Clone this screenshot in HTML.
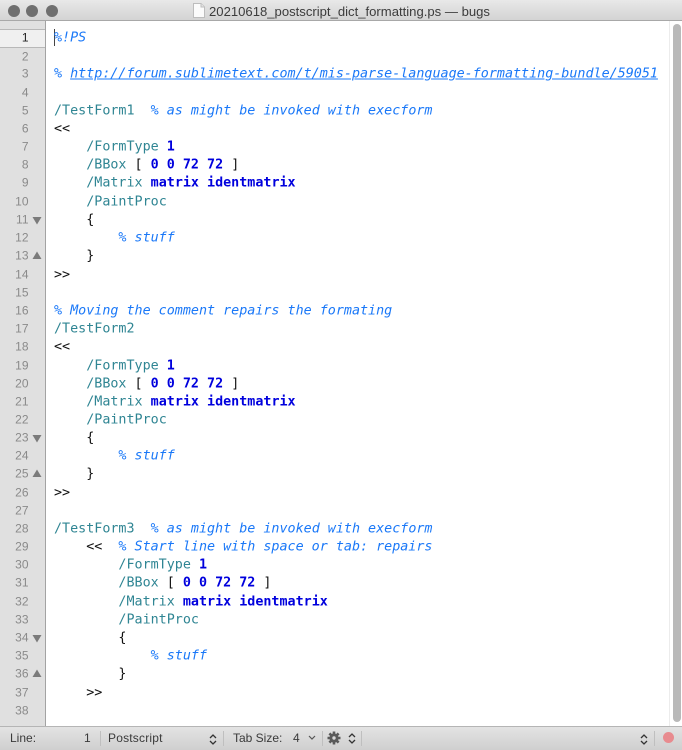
<!DOCTYPE html>
<html><head><meta charset="utf-8">
<style>
html,body{margin:0;padding:0;width:682px;height:750px;overflow:hidden;background:#fff}
#w{position:absolute;left:0;top:0;width:682px;height:750px;overflow:hidden;filter:blur(.35px)}
#tb{position:absolute;left:0;top:0;width:682px;height:20px;background:linear-gradient(#e8e8e8,#d3d3d3);border-bottom:1px solid #a8a8a8;box-sizing:content-box}
.dot{position:absolute;top:5px;width:12px;height:12px;border-radius:50%;background:#6f6f6f}
#title{position:absolute;left:209px;top:3px;font:13.1px/17px "Liberation Sans",sans-serif;color:#3c3c3c;white-space:pre}
#gut{position:absolute;left:0;top:21px;width:45px;height:705px;background:#e0e0e0;border-right:1px solid #a3a3a3}
#cur{position:absolute;left:0;top:29px;width:45px;height:17px;background:#f0f0f0;border-top:1px solid #b8b8b8;border-bottom:1px solid #b8b8b8}
.n{position:absolute;left:0;width:28.500px;text-align:right;font:12px/18px "Liberation Sans",sans-serif;color:#8a8a8a;transform:translateY(.5px)}
.c{position:absolute;left:54px;font:13.39px/18px "DejaVu Sans Mono",monospace;color:#111;white-space:pre;transform:translateY(1.5px)}
.k{color:#2f8593}.o{color:#1a78f8;font-style:italic}.b{color:#0000dd;font-weight:bold}.u{text-decoration:underline}
#caret{position:absolute;left:54px;top:29px;width:1px;height:17px;background:#444}
#sbt{position:absolute;left:672.500px;top:24px;width:8px;height:698px;background:#b9b9b9;border-radius:4px}
#sbl{position:absolute;left:669px;top:21px;width:1px;height:705px;background:#ececec}
#st{position:absolute;left:0;top:726px;width:682px;height:24px;background:linear-gradient(#e3e3e3,#cfcfcf);border-top:1px solid #b5b5b5;box-sizing:border-box;font:12px/23px "Liberation Sans",sans-serif;color:#3a3a3a}
#st span{position:absolute;top:0;white-space:pre}
#st i{position:absolute;top:4px;width:1px;height:15px;background:#bfbfbf}
#st svg{position:absolute}
</style></head><body><div id="w">
<div id="tb">
<div class="dot" style="left:7.500px"></div><div class="dot" style="left:26px"></div><div class="dot" style="left:45.500px"></div>
<svg style="position:absolute;left:193px;top:3px" width="12" height="15" viewBox="0 0 12 15"><path d="M.5.5H8L11.500 4V14.500H.5Z" fill="#fbfbfb" stroke="#bdbdbd"/><path d="M8 .5V4H11.500" fill="#e5e5e5" stroke="#bdbdbd"/></svg>
<div id="title">20210618_postscript_dict_formatting.ps — bugs</div>
</div>
<div id="gut"></div>
<div id="cur"></div>
<div id="sbl"></div>
<div id="sbt"></div>
<div class="n" style="top:28px;color:#222">1</div><div class="n" style="top:47px">2</div><div class="n" style="top:64px">3</div><div class="n" style="top:83px">4</div><div class="n" style="top:101px">5</div><div class="n" style="top:119px">6</div><div class="n" style="top:137px">7</div><div class="n" style="top:155px">8</div><div class="n" style="top:173px">9</div><div class="n" style="top:192px">10</div><div class="n" style="top:210px">11</div><div class="n" style="top:228px">12</div><div class="n" style="top:246px">13</div><div class="n" style="top:265px">14</div><div class="n" style="top:283px">15</div><div class="n" style="top:301px">16</div><div class="n" style="top:319px">17</div><div class="n" style="top:337px">18</div><div class="n" style="top:356px">19</div><div class="n" style="top:374px">20</div><div class="n" style="top:392px">21</div><div class="n" style="top:410px">22</div><div class="n" style="top:428px">23</div><div class="n" style="top:446px">24</div><div class="n" style="top:464px">25</div><div class="n" style="top:483px">26</div><div class="n" style="top:501px">27</div><div class="n" style="top:519px">28</div><div class="n" style="top:537px">29</div><div class="n" style="top:555px">30</div><div class="n" style="top:573px">31</div><div class="n" style="top:592px">32</div><div class="n" style="top:610px">33</div><div class="n" style="top:628px">34</div><div class="n" style="top:646px">35</div><div class="n" style="top:664px">36</div><div class="n" style="top:683px">37</div><div class="n" style="top:701px">38</div>
<svg style="position:absolute;left:0;top:0" width="46" height="726">
<g fill="#7b7b7b"><path d="M32.500 217h9l-4.500 7.500zM32.500 435h9l-4.500 7.500zM32.500 635h9l-4.500 7.500zM37 251.500l4.500 7.500h-9zM37 469.500l4.500 7.500h-9zM37 669.500l4.500 7.500h-9z"/></g></svg>
<div id="caret"></div>
<div class="c" style="top:28px"><span class="o">%!PS</span></div>
<div class="c" style="top:64px"><span class="o">% <span class="u">http://forum.sublimetext.com/t/mis-parse-language-formatting-bundle/59051</span></span></div>
<div class="c" style="top:101px"><span class="k">/TestForm1</span>  <span class="o">% as might be invoked with execform</span></div>
<div class="c" style="top:119px">&lt;&lt;</div>
<div class="c" style="top:137px">    <span class="k">/FormType</span> <span class="b">1</span></div>
<div class="c" style="top:155px">    <span class="k">/BBox</span> [ <span class="b">0 0 72 72</span> ]</div>
<div class="c" style="top:173px">    <span class="k">/Matrix</span> <span class="b">matrix identmatrix</span></div>
<div class="c" style="top:192px">    <span class="k">/PaintProc</span></div>
<div class="c" style="top:210px">    {</div>
<div class="c" style="top:228px">        <span class="o">% stuff</span></div>
<div class="c" style="top:246px">    }</div>
<div class="c" style="top:265px">&gt;&gt;</div>
<div class="c" style="top:301px"><span class="o">% Moving the comment repairs the formating</span></div>
<div class="c" style="top:319px"><span class="k">/TestForm2</span></div>
<div class="c" style="top:337px">&lt;&lt;</div>
<div class="c" style="top:356px">    <span class="k">/FormType</span> <span class="b">1</span></div>
<div class="c" style="top:374px">    <span class="k">/BBox</span> [ <span class="b">0 0 72 72</span> ]</div>
<div class="c" style="top:392px">    <span class="k">/Matrix</span> <span class="b">matrix identmatrix</span></div>
<div class="c" style="top:410px">    <span class="k">/PaintProc</span></div>
<div class="c" style="top:428px">    {</div>
<div class="c" style="top:446px">        <span class="o">% stuff</span></div>
<div class="c" style="top:464px">    }</div>
<div class="c" style="top:483px">&gt;&gt;</div>
<div class="c" style="top:519px"><span class="k">/TestForm3</span>  <span class="o">% as might be invoked with execform</span></div>
<div class="c" style="top:537px">    &lt;&lt;  <span class="o">% Start line with space or tab: repairs</span></div>
<div class="c" style="top:555px">        <span class="k">/FormType</span> <span class="b">1</span></div>
<div class="c" style="top:573px">        <span class="k">/BBox</span> [ <span class="b">0 0 72 72</span> ]</div>
<div class="c" style="top:592px">        <span class="k">/Matrix</span> <span class="b">matrix identmatrix</span></div>
<div class="c" style="top:610px">        <span class="k">/PaintProc</span></div>
<div class="c" style="top:628px">        {</div>
<div class="c" style="top:646px">            <span class="o">% stuff</span></div>
<div class="c" style="top:664px">        }</div>
<div class="c" style="top:683px">    &gt;&gt;</div>
<div id="st">
<span style="left:10px">Line:</span><span style="left:84px">1</span>
<i style="left:100px"></i><span style="left:108px;letter-spacing:.2px">Postscript</span>
<svg style="left:209px;top:6px" width="8" height="13" viewBox="0 0 8 13"><path d="M1 5l3-3 3 3M1 8l3 3 3-3" fill="none" stroke="#333" stroke-width="1.300"/></svg>
<i style="left:223px"></i><span style="left:233px">Tab Size:</span><span style="left:293px">4</span>
<svg style="left:307.500px;top:8px" width="8" height="6" viewBox="0 0 8 6"><path d="M1 1l3 3 3-3" fill="none" stroke="#555" stroke-width="1.200"/></svg>
<i style="left:321.500px"></i>
<svg style="left:327px;top:4px" width="14" height="14" viewBox="0 0 14 14"><path d="M7 .5v13M.5 7h13M2.400 2.400l9.200 9.200M11.600 2.400l-9.200 9.200" stroke="#5a5a5a" stroke-width="2.600"/><circle cx="7" cy="7" r="4.600" fill="#5a5a5a"/><circle cx="7" cy="7" r="1.700" fill="#d8d8d8"/></svg>
<svg style="left:348px;top:5px" width="8" height="13" viewBox="0 0 8 13"><path d="M1 5l3-3 3 3M1 8l3 3 3-3" fill="none" stroke="#333" stroke-width="1.300"/></svg>
<i style="left:361px"></i>
<svg style="left:640px;top:6px" width="8" height="13" viewBox="0 0 8 13"><path d="M1 5l3-3 3 3M1 8l3 3 3-3" fill="none" stroke="#333" stroke-width="1.300"/></svg>
<i style="left:654px"></i>
<div style="position:absolute;left:663px;top:5px;width:11px;height:11px;border-radius:50%;background:#e88b8f"></div>
</div>
</div></body></html>
